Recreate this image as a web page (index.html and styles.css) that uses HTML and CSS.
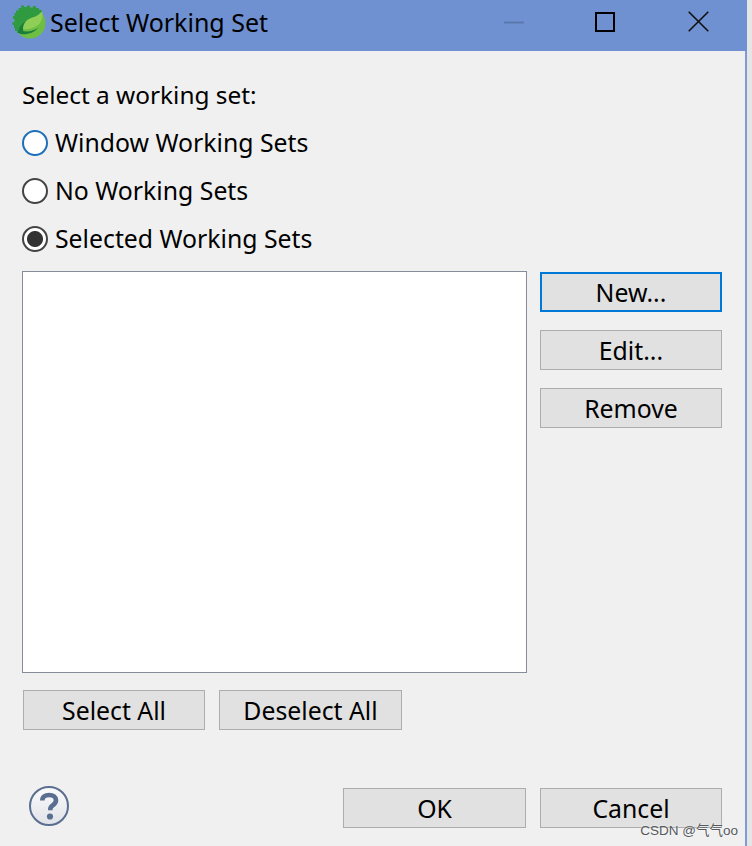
FILE: index.html
```html
<!DOCTYPE html>
<html lang="en">
<head>
<meta charset="utf-8">
<title>Select Working Set</title>
<link rel="stylesheet" href="styles.css">
</head>
<body>
<div class="window">
  <header class="titlebar">
    <svg class="app-icon" width="34" height="34" viewBox="0 0 34 34" aria-hidden="true">
      <circle cx="18" cy="18" r="15.500" fill="#6fbe44"/>
      <path fill="#2f9a3f" d="M30 5h-3V3h-3V1h-3v1.500h-3V.5h-3V2h-3V.5H9V3H6.500v2.500H4V8H2.500v3H1v3h1.500v3H.5v3H2v3h1v3h2v2h2l2 1c1-5 5-9 11-11 6-1 9-5 10-10z"/>
      <path fill="#1a7f3c" d="M6 28c1-7 5-11 11-13-4 3-6 7-6 11 5 1 10 0 15-3-4 5-11 7-17 6l-2-1z"/>
      <path fill="#8fce57" d="M11 24c0-4 2-8 6-10 4-2 10-3 13-8 1 6 0 11-4 14-4 3-10 5-15 4z"/>
    </svg>
    <span class="title">Select Working Set</span>
    <div class="controls">
      <svg class="control control-min" width="20" height="20" viewBox="0 0 20 20" aria-hidden="true"><path d="M0 10.5h20" stroke="#5a78ae" stroke-width="2"/></svg>
      <svg class="control control-max" width="20" height="20" viewBox="0 0 20 20" aria-hidden="true"><rect x="1" y="1" width="18" height="18" fill="none" stroke="#000" stroke-width="2"/></svg>
      <svg class="control control-close" width="21" height="21" viewBox="0 0 21 21" aria-hidden="true"><path d="M.7.7l19.6 19.6M20.3.7L.7 20.3" fill="none" stroke="#111" stroke-width="1.6"/></svg>
    </div>
  </header>

  <main class="content">
    <p class="prompt">Select a working set:</p>
    <div class="radio-row"><span class="radio radio-focus"></span><span class="radio-label">Window Working Sets</span></div>
    <div class="radio-row"><span class="radio"></span><span class="radio-label">No Working Sets</span></div>
    <div class="radio-row"><span class="radio radio-on"></span><span class="radio-label">Selected Working Sets</span></div>

    <div class="list-area">
      <div class="listbox"></div>
      <div class="side-buttons">
        <button class="btn btn-default">New...</button>
        <button class="btn">Edit...</button>
        <button class="btn">Remove</button>
      </div>
    </div>

    <div class="select-buttons">
      <button class="btn btn-select">Select All</button>
      <button class="btn btn-deselect">Deselect All</button>
    </div>

    <footer class="footer">
      <svg class="help" width="42" height="42" viewBox="0 0 42 42" aria-hidden="true">
        <defs><linearGradient id="helpfill" x1="0" y1="0" x2="0" y2="1"><stop offset="0" stop-color="#fbfbfc"/><stop offset="1" stop-color="#dfe2e8"/></linearGradient></defs>
        <circle cx="21" cy="21" r="19" fill="url(#helpfill)" stroke="#5a6e90" stroke-width="2"/>
        <path d="M14.3 15.500c0-3.800 3-5.500 6.800-5.500 4 0 6.900 2 6.900 5.300 0 2.600-1.500 3.800-3.300 5.100-1.700 1.200-2.400 2-2.400 3.900v1" fill="none" stroke="#5a6e90" stroke-width="4.600"/>
        <circle cx="22" cy="31.500" r="3.100" fill="#5a6e90"/>
      </svg>
      <div class="footer-buttons">
        <button class="btn">OK</button>
        <button class="btn">Cancel</button>
      </div>
    </footer>
  </main>
</div>
<span class="watermark">CSDN @气气oo</span>
</body>
</html>
```
FILE: styles.css
```css
* { box-sizing: border-box; }
html, body { margin: 0; height: 846px; overflow: hidden; }
body {
  position: relative;
  background: linear-gradient(90deg, #c9c9c9, #e6e6e6);
  font-family: "Noto Sans", "Open Sans", "Liberation Sans", sans-serif;
  color: #000;
}
.window {
  width: 747px;
  height: 846px;
  background: #f0f0f0;
  border-right: 2px solid #7f9bd4;
}
.titlebar {
  height: 51px;
  background: #6f91d2;
  display: flex;
  align-items: center;
  padding-left: 12px;
  margin-right: -2px;
}
.app-icon { flex: none; margin-top: -8px; }
.title { font-size: 25px; margin-left: 4px; margin-top: -8px; white-space: nowrap; }
.controls { margin-left: auto; display: flex; align-items: center; margin-top: -8px; padding-right: 38px; }
.control { display: block; }
.control-max { margin-left: 71px; }
.control-close { margin-left: 73px; }
.content { padding: 0 23px 0 22px; }
.prompt { margin: 0; height: 68px; padding-top: 26px; font-size: 24.4px; line-height: 36px; }
.radio-row {
  height: 48px;
  display: flex;
  align-items: center;
  gap: 7px;
  font-size: 24.800px;
}
.radio-label { margin-top: -2px; }
.radio {
  width: 26px;
  height: 26px;
  flex: none;
  border-radius: 50%;
  border: 2px solid #444;
  background: #fff;
}
.radio-focus { border-color: #1c6fb8; }
.radio-on { background: radial-gradient(circle, #333 0 7.500px, #fff 8.500px); }
.list-area {
  display: flex;
  gap: 13px;
  margin-top: 8px;
}
.listbox {
  width: 505px;
  height: 402px;
  background: #fff;
  border: 1px solid #868d99;
}
.side-buttons {
  display: flex;
  flex-direction: column;
  gap: 18px;
  padding-top: 1px;
}
.btn {
  width: 182px;
  height: 40px;
  padding: 0;
  background: #e1e1e1;
  border: 1px solid #adadad;
  border-radius: 0;
  font: inherit;
  font-size: 24.800px;
  line-height: 1;
  color: #000;
}
.btn-default { border: 2px solid #0078d7; }
.select-buttons {
  display: flex;
  gap: 14px;
  margin-top: 17px;
  padding-left: 1px;
}
.btn-deselect { width: 183px; }
.footer {
  display: flex;
  justify-content: space-between;
  align-items: flex-start;
  margin-top: 58px;
  padding-left: 6px;
}
.help { display: block; margin-top: -3px; }
.footer-buttons { display: flex; gap: 14px; }
.footer-buttons .btn:first-child { width: 183px; }
.watermark {
  position: absolute;
  right: 14px;
  bottom: 7px;
  font-family: "Liberation Sans", "Noto Sans CJK SC", sans-serif;
  font-size: 13.500px;
  color: #55585c;
  text-shadow: 0 0 2px #fff;
}
```
